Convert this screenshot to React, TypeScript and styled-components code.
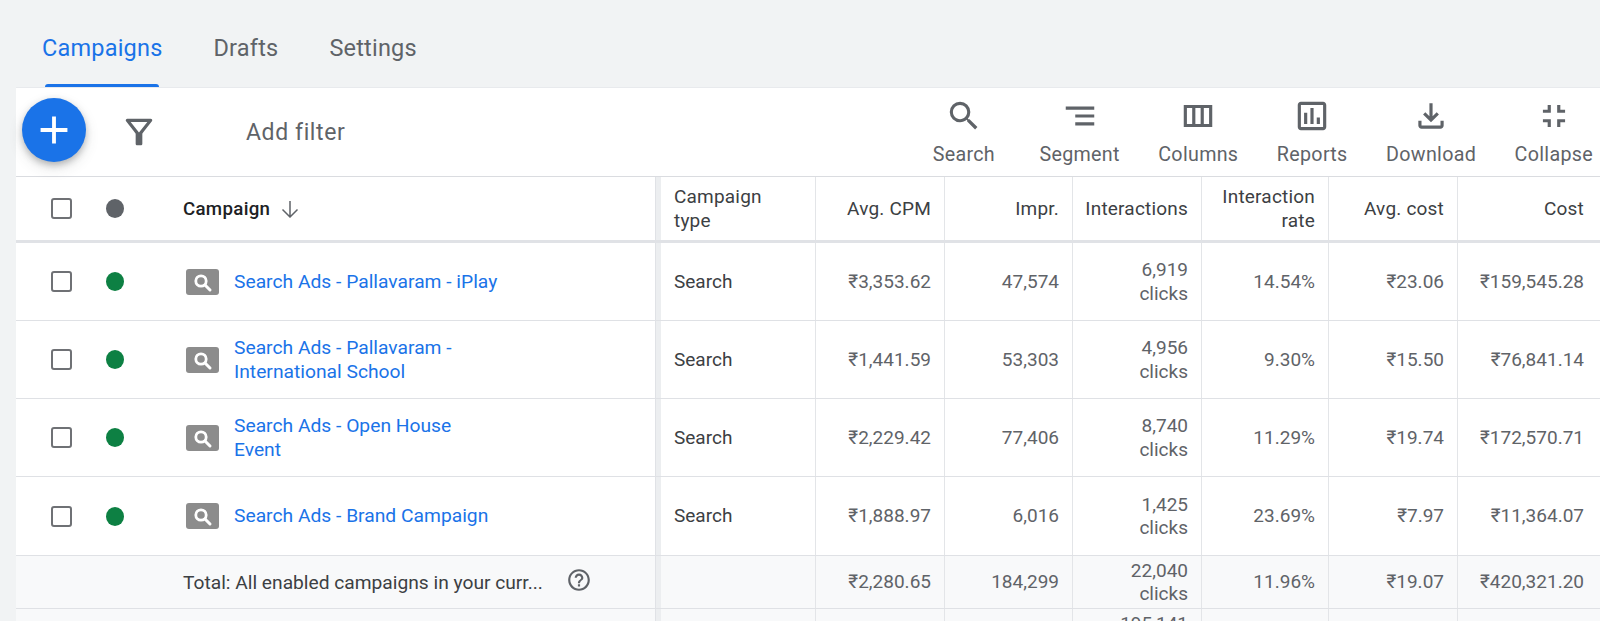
import React from 'react';
import styled, { createGlobalStyle } from 'styled-components';
import {
  MdSearch,
  MdSegment,
  MdOutlineViewColumn,
  MdOutlineAssessment,
  MdOutlineFileDownload,
  MdFullscreenExit,
  MdOutlineFilterAlt,
  MdAdd,
  MdHelpOutline,
} from 'react-icons/md';

const GlobalStyle = createGlobalStyle`
  html, body {
    margin: 0;
    height: 100%;
    overflow: hidden;
    background: #f1f3f4;
    font-family: Roboto, "Liberation Sans", sans-serif;
    color: #3c4043;
  }
`;

const COLUMNS = '90px 18px 530px 7px 155px 129px 128px 129px 127px 129px 142px';

const Page = styled.div`
  height: 621px;
  overflow: hidden;
`;

const Tabs = styled.nav`
  display: flex;
  height: 87px;
  padding-left: 42px;
  gap: 51px;
`;

const Tab = styled.div<{ $active?: boolean }>`
  position: relative;
  padding-top: 34px;
  font-size: 23.5px;
  line-height: 28px;
  letter-spacing: 0.2px;
  color: ${p => (p.$active ? '#1a73e8' : '#5f6368')};
  &::after {
    content: '';
    display: ${p => (p.$active ? 'block' : 'none')};
    position: absolute;
    left: 3px;
    right: 3px;
    bottom: 0;
    height: 3px;
    border-radius: 3px 3px 0 0;
    background: #1a73e8;
  }
`;

const Panel = styled.section`
  margin-left: 16px;
  background: #fff;
  border-top: 1px solid #e8eaed;
`;

const Toolbar = styled.div`
  display: flex;
  align-items: center;
  height: 88px;
  padding-right: 7px;
  border-bottom: 1px solid #dadce0;
`;

const Fab = styled.button`
  width: 64px;
  height: 64px;
  margin: -4px 0 0 6px;
  padding: 0;
  border: 0;
  border-radius: 50%;
  display: flex;
  align-items: center;
  justify-content: center;
  background: #1a73e8;
  color: #fff;
  font-size: 46px;
  box-shadow: 0 3px 6px rgba(60, 64, 67, 0.3), 0 6px 14px rgba(60, 64, 67, 0.15);
`;

const FilterIcon = styled.span`
  display: flex;
  margin-left: 33px;
  font-size: 40px;
  color: #5f6368;
`;

const AddFilter = styled.span`
  margin: 0 0 0 87px;
  font-size: 23px;
  letter-spacing: 0.6px;
  color: #5f6368;
`;

const Actions = styled.div`
  margin-left: auto;
  display: flex;
  gap: 38.5px;
`;

const Action = styled.div<{ $extra?: number }>`
  display: flex;
  flex-direction: column;
  align-items: center;
  margin-right: ${p => p.$extra ?? 0}px;
  color: #5f6368;
  font-size: 19.7px;
  line-height: 24px;
  letter-spacing: 0.3px;
  svg {
    font-size: 38px;
    margin-bottom: 8px;
  }
`;

const Row = styled.div<{ $height: number; $total?: boolean; $heavy?: boolean }>`
  display: grid;
  grid-template-columns: ${COLUMNS};
  height: ${p => p.$height}px;
  box-sizing: border-box;
  background: ${p => (p.$total ? '#f8f9fa' : '#fff')};
  border-bottom: ${p => (p.$heavy ? '3px solid #e0e2e6' : '1px solid #dfe1e5')};
`;

const Centered = styled.div`
  display: flex;
  align-items: center;
  justify-content: center;
`;

const Divider = styled.div`
  background: #eceef0;
  border-left: 1px solid #e0e2e6;
  background-clip: padding-box;
  width: 5px;
  margin-left: 1px;
`;

const CheckBox = styled.span`
  width: 21px;
  height: 21px;
  box-sizing: border-box;
  border: 2.5px solid #6f7175;
  border-radius: 3px;
`;

const Dot = styled.span<{ $color: string }>`
  width: 19px;
  height: 19px;
  border-radius: 50%;
  background: ${p => p.$color};
`;

const CampaignHead = styled.div`
  display: flex;
  align-items: center;
  padding-left: 59px;
  font-size: 18.7px;
  font-weight: 500;
  letter-spacing: 0.3px;
  color: #202124;
  svg {
    margin-left: 11px;
  }
`;

const CampaignCell = styled.div`
  display: flex;
  align-items: center;
  padding-left: 62px;
`;

const TypeBadge = styled.svg`
  width: 33px;
  height: 26px;
  flex: none;
  margin-right: 15px;
`;

const CampaignLink = styled.a`
  white-space: pre-line;
  font-size: 19.25px;
  line-height: 23.5px;
  color: #1a73e8;
`;

const TotalLabel = styled.div`
  display: flex;
  align-items: center;
  padding-left: 59px;
  font-size: 19.2px;
  color: #3c4043;
  svg {
    margin-left: 23px;
    margin-top: -5px;
    font-size: 26px;
    color: #5f6368;
  }
`;

const Cell = styled.div<{ $left?: boolean; $last?: boolean }>`
  display: flex;
  align-items: center;
  justify-content: ${p => (p.$left ? 'flex-start' : 'flex-end')};
  box-sizing: border-box;
  padding: ${p => (p.$left ? '0 13px' : p.$last ? '0 16px 0 0' : '0 13px 0 8px')};
  border-right: ${p => (p.$last ? '0' : '1px solid #e3e5e8')};
  font-size: 19px;
  line-height: 23.5px;
  text-align: ${p => (p.$left ? 'left' : 'right')};
  color: ${p => (p.$left ? '#3c4043' : '#5f6368')};
`;

const HeadCell = styled(Cell)`
  color: #3c4043;
  letter-spacing: 0.2px;
`;

const rows = [
  {
    name: 'Search Ads - Pallavaram - iPlay',
    cpm: '₹3,353.62',
    impr: '47,574',
    clicks: '6,919',
    rate: '14.54%',
    avg: '₹23.06',
    cost: '₹159,545.28',
  },
  {
    name: 'Search Ads - Pallavaram -\nInternational School',
    cpm: '₹1,441.59',
    impr: '53,303',
    clicks: '4,956',
    rate: '9.30%',
    avg: '₹15.50',
    cost: '₹76,841.14',
  },
  {
    name: 'Search Ads - Open House\nEvent',
    cpm: '₹2,229.42',
    impr: '77,406',
    clicks: '8,740',
    rate: '11.29%',
    avg: '₹19.74',
    cost: '₹172,570.71',
  },
  {
    name: 'Search Ads - Brand Campaign',
    cpm: '₹1,888.97',
    impr: '6,016',
    clicks: '1,425',
    rate: '23.69%',
    avg: '₹7.97',
    cost: '₹11,364.07',
  },
];

const heads = [
  { label: 'Avg. CPM' },
  { label: 'Impr.' },
  { label: 'Interactions' },
  { label: 'Interaction rate' },
  { label: 'Avg. cost' },
  { label: 'Cost', last: true },
];

function SearchBadge() {
  return (
    <TypeBadge viewBox="0 0 33 26">
      <rect width="33" height="26" rx="3" fill="#8c8c8c" />
      <circle cx="15" cy="12" r="5.2" fill="none" stroke="#fff" strokeWidth="2.8" />
      <path d="M19 16l5 5" stroke="#fff" strokeWidth="3" strokeLinecap="round" />
    </TypeBadge>
  );
}

export default function App() {
  return (
    <Page>
      <GlobalStyle />
      <Tabs>
        <Tab $active>Campaigns</Tab>
        <Tab>Drafts</Tab>
        <Tab>Settings</Tab>
      </Tabs>
      <Panel>
        <Toolbar>
          <Fab>
            <MdAdd />
          </Fab>
          <FilterIcon>
            <MdOutlineFilterAlt />
          </FilterIcon>
          <AddFilter>Add filter</AddFilter>
          <Actions>
            <Action $extra={6}>
              <MdSearch />
              Search
            </Action>
            <Action>
              <MdSegment />
              Segment
            </Action>
            <Action>
              <MdOutlineViewColumn />
              Columns
            </Action>
            <Action>
              <MdOutlineAssessment />
              Reports
            </Action>
            <Action>
              <MdOutlineFileDownload />
              Download
            </Action>
            <Action>
              <MdFullscreenExit />
              Collapse
            </Action>
          </Actions>
        </Toolbar>

        <Row $height={66} $heavy>
          <Centered>
            <CheckBox />
          </Centered>
          <Centered>
            <Dot $color="#5f6368" />
          </Centered>
          <CampaignHead>
            Campaign
            <svg width="18" height="18" viewBox="0 0 18 18" fill="none" stroke="#5f6368" strokeWidth="1.5">
              <path d="M9 1v16M1.5 9.5L9 17l7.5-7.5" />
            </svg>
          </CampaignHead>
          <Divider />
          <HeadCell $left>
            Campaign
            <br />
            type
          </HeadCell>
          {heads.map(h => (
            <HeadCell key={h.label} $last={h.last}>
              {h.label === 'Interaction rate' ? (
                <div>
                  Interaction
                  <br />
                  rate
                </div>
              ) : (
                h.label
              )}
            </HeadCell>
          ))}
        </Row>

        {rows.map((r, i) => (
          <Row key={r.name} $height={i === 3 ? 79 : 78}>
            <Centered>
              <CheckBox />
            </Centered>
            <Centered>
              <Dot $color="#0d8043" />
            </Centered>
            <CampaignCell>
              <SearchBadge />
              <CampaignLink>{r.name}</CampaignLink>
            </CampaignCell>
            <Divider />
            <Cell $left>Search</Cell>
            <Cell>{r.cpm}</Cell>
            <Cell>{r.impr}</Cell>
            <Cell>
              <div>
                {r.clicks}
                <br />
                clicks
              </div>
            </Cell>
            <Cell>{r.rate}</Cell>
            <Cell>{r.avg}</Cell>
            <Cell $last>{r.cost}</Cell>
          </Row>
        ))}

        <Row $height={53} $total>
          <div />
          <div />
          <TotalLabel>
            Total: All enabled campaigns in your curr...
            <MdHelpOutline />
          </TotalLabel>
          <Divider />
          <Cell $left />
          <Cell>₹2,280.65</Cell>
          <Cell>184,299</Cell>
          <Cell>
            <div>
              22,040
              <br />
              clicks
            </div>
          </Cell>
          <Cell>11.96%</Cell>
          <Cell>₹19.07</Cell>
          <Cell $last>₹420,321.20</Cell>
        </Row>

        <Row $height={53} $total>
          <div />
          <div />
          <div />
          <Divider />
          <Cell $left />
          <Cell />
          <Cell />
          <Cell>
            <div>
              195,141
              <br />
              clicks
            </div>
          </Cell>
          <Cell />
          <Cell />
          <Cell $last />
        </Row>
      </Panel>
    </Page>
  );
}
